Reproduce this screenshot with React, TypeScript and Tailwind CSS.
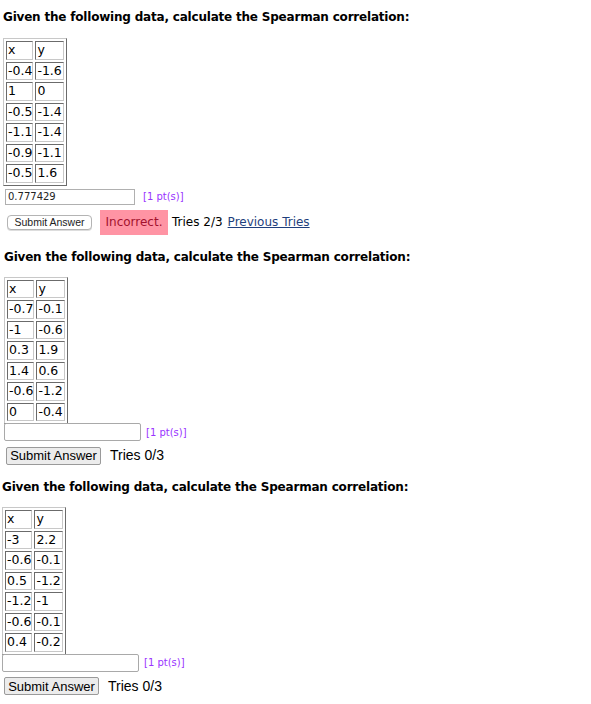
import React from "react";

type Row = [string, string];

const problems: { rows: Row[]; answer: string; tries: string; first?: boolean }[] = [
  {
    rows: [
      ["-0.4", "-1.6"],
      ["1", "0"],
      ["-0.5", "-1.4"],
      ["-1.1", "-1.4"],
      ["-0.9", "-1.1"],
      ["-0.5", "1.6"],
    ],
    answer: "0.777429",
    tries: "Tries 2/3",
    first: true,
  },
  {
    rows: [
      ["-0.7", "-0.1"],
      ["-1", "-0.6"],
      ["0.3", "1.9"],
      ["1.4", "0.6"],
      ["-0.6", "-1.2"],
      ["0", "-0.4"],
    ],
    answer: "",
    tries: "Tries 0/3",
  },
  {
    rows: [
      ["-3", "2.2"],
      ["-0.6", "-0.1"],
      ["0.5", "-1.2"],
      ["-1.2", "-1"],
      ["-0.6", "-0.1"],
      ["0.4", "-0.2"],
    ],
    answer: "",
    tries: "Tries 0/3",
  },
];

const verdana = "font-['DejaVu_Sans',Verdana,sans-serif]";
const arial = "font-['Liberation_Sans',Arial,sans-serif]";

function DataTable({ rows }: { rows: Row[] }) {
  return (
    <table className="border-separate border-spacing-[2px] border border-t-[#c8c8c8] border-l-[#c8c8c8] border-r-[#6b6b6b] border-b-[#6b6b6b] text-[12.5px] leading-[14.5px] text-black">
      <tbody>
        {[["x", "y"] as Row, ...rows].map((r, i) => (
          <tr key={i}>
            {r.map((c, j) => (
              <td
                key={j}
                className={`border border-t-[#6b6b6b] border-l-[#6b6b6b] border-r-[#c8c8c8] border-b-[#c8c8c8] p-0 pl-px py-px text-left whitespace-nowrap ${j === 0 ? "w-[27px]" : "w-[29px]"}`}
              >
                {c}
              </td>
            ))}
          </tr>
        ))}
      </tbody>
    </table>
  );
}

function Heading() {
  return (
    <h3 className="text-[12px] tracking-[-0.2px] font-bold leading-[16px] text-black">
      Given the following data, calculate the Spearman correlation:
    </h3>
  );
}

function FirstProblem() {
  const p = problems[0];
  return (
    <div className="pl-[3px] pt-[9px]">
      <Heading />
      <div className="mt-[13px]">
        <DataTable rows={p.rows} />
      </div>
      <div className="flex items-center gap-[8px] mt-[3px] ml-[2px]">
        <input
          readOnly
          value={p.answer}
          className={`h-[16px] w-[130px] border border-[#b0b0b0] px-[2px] text-[10px] text-[#222] outline-none ${verdana}`}
        />
        <span className="text-[10px] text-[#9933ff]">[1 pt(s)]</span>
      </div>
      <div className="flex items-center mt-[5px] ml-[4px] text-[12px]">
        <button
          className={`h-[15px] w-[85px] rounded-[4px] border border-[#b4b4b4] bg-white text-[10.5px] leading-none text-[#222] shadow-[0_1px_0_#ddd] ${arial}`}
        >
          Submit Answer
        </button>
        <span className="ml-[8px] h-[25px] w-[68px] flex items-center justify-center bg-[#ff94a4] text-[#a3122e]">
          Incorrect.
        </span>
        <span className="ml-[4px]">{p.tries}</span>
        <a href="#" className="ml-[5px] underline text-[#1f3f7d]">
          Previous Tries
        </a>
      </div>
    </div>
  );
}

function Problem({ idx, pad, top }: { idx: number; pad: string; top: string }) {
  const p = problems[idx];
  return (
    <div className={`${pad} ${top}`}>
      <Heading />
      <div className="mt-[12px]">
        <DataTable rows={p.rows} />
      </div>
      <div className="flex items-center gap-[5px] -mt-px">
        <input
          readOnly
          value={p.answer}
          className={`h-[18px] w-[137px] rounded-[2px] border border-[#a9a9a9] px-[2px] text-[10px] text-[#222] outline-none ${verdana}`}
        />
        <span className="text-[10px] text-[#9933ff]">[1 pt(s)]</span>
      </div>
      <div className="flex items-center mt-[4px] ml-[2px]">
        <button
          className={`h-[18px] w-[95px] rounded-[2px] border border-[#9a9a9a] bg-[#ececec] text-[13px] leading-none text-black ${arial}`}
        >
          Submit Answer
        </button>
        <span className={`ml-[9px] text-[14px] ${arial}`}>{p.tries}</span>
      </div>
    </div>
  );
}

export default function App() {
  return (
    <div className={`w-[591px] h-[704px] bg-white text-black ${verdana}`}>
      <FirstProblem />
      <Problem idx={1} pad="pl-[4px]" top="mt-[14px]" />
      <Problem idx={2} pad="pl-[2px]" top="mt-[13px]" />
    </div>
  );
}
